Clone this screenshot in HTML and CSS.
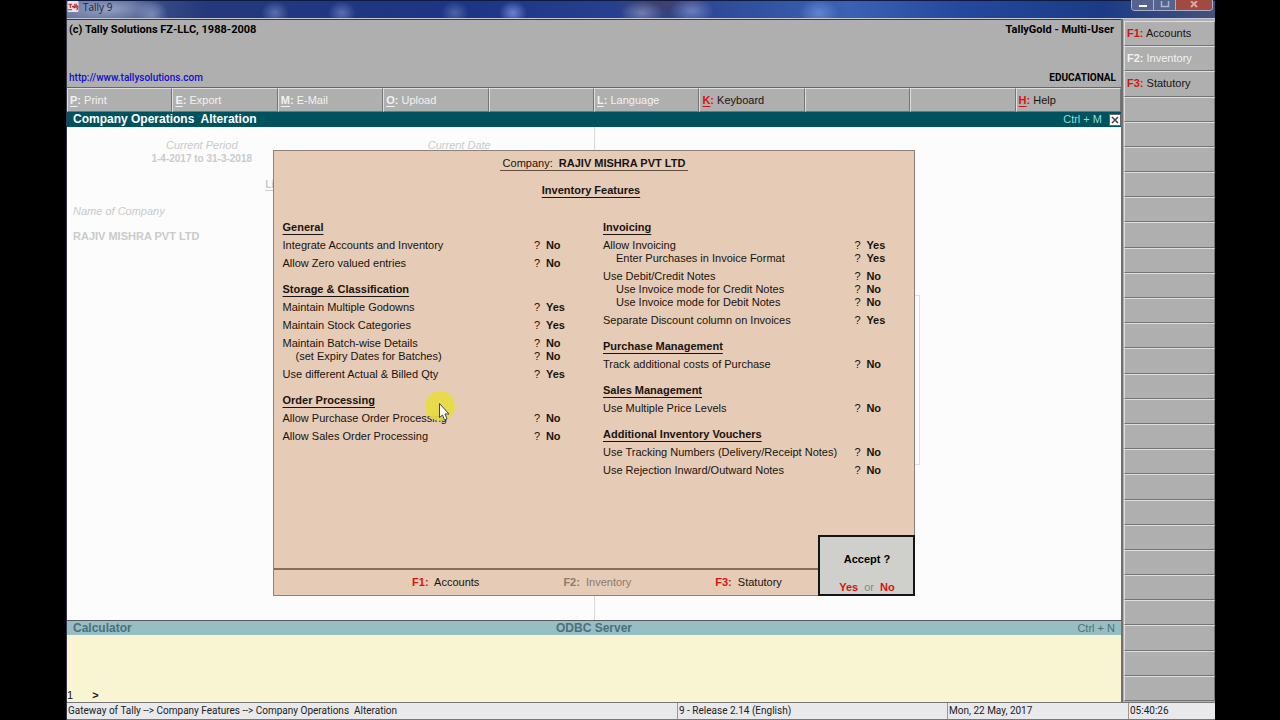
FILE: index.html
```html
<!DOCTYPE html>
<html lang="en">
<head>
<meta charset="utf-8">
<title>Tally 9</title>
<link rel="stylesheet" href="styles.css">
</head>
<body>
<div class="window">
  <header class="titlebar">
    <svg class="app-icon" viewBox="0 0 12 12" aria-hidden="true"><rect width="12" height="12" rx="1" fill="#eee3e6"/><path d="M1 3.500h4M3 3.500v4M5 7q.5-2 2-1v2M8 3v5M9.500 3v5M10.500 5l1 2-1.500 3M0 9.500h5" fill="none" stroke="#b0282c" stroke-width="1.200"/></svg>
    <span class="app-name">Tally 9</span>
    <div class="win-controls">
      <button class="win-btn" aria-label="Minimize"><svg viewBox="0 0 10 8"><path d="M1 4h8v2H1z" fill="#fff"/></svg></button>
      <button class="win-btn" aria-label="Restore"><svg viewBox="0 0 10 8"><path d="M1.500 0v5.500h7V0" fill="none" stroke="#a9b5d0" stroke-width="1.500"/></svg></button>
      <button class="win-btn win-close" aria-label="Close"><svg viewBox="0 0 10 8"><path d="M2 0l6 6M8 0L2 6" stroke="#d8a9a4" stroke-width="2"/></svg></button>
    </div>
  </header>

  <div class="workspace">
    <div class="main">
      <section class="banner">
        <div class="banner-row"><span>(c) Tally Solutions FZ-LLC, 1988-2008</span><span class="edition">TallyGold - Multi-User</span></div>
        <div class="banner-row"><a class="site" href="#">http://www.tallysolutions.com</a><span class="mode">EDUCATIONAL</span></div>
      </section>
      <nav class="toolbar">
        <button class="tool off"><b><u>P</u>:</b> Print</button>
        <button class="tool off"><b><u>E</u>:</b> Export</button>
        <button class="tool off"><b><u>M</u>:</b> E-Mail</button>
        <button class="tool off"><b><u>O</u>:</b> Upload</button>
        <button class="tool" aria-label="Empty"></button>
        <button class="tool off"><b><u>L</u>:</b> Language</button>
        <button class="tool"><b><u>K</u>:</b> Keyboard</button>
        <button class="tool" aria-label="Empty"></button>
        <button class="tool" aria-label="Empty"></button>
        <button class="tool"><b><u>H</u>:</b> Help</button>
      </nav>
      <div class="screen-head">
        <h1>Company Operations&nbsp; Alteration</h1>
        <span class="shortcut">Ctrl + M</span>
        <button class="close" aria-label="Close screen"><svg viewBox="0 0 8 8"><path d="M1 1l6 6M7 1L1 7" stroke="#444" stroke-width="1.500"/></svg></button>
      </div>

      <div class="stage">
        <div class="gateway">
          <div class="periods">
            <div><i>Current Period</i><b>1-4-2017 to 31-3-2018</b></div>
            <div><i>Current Date</i></div>
          </div>
          <p class="list-title">List of Selected Companies</p>
          <p class="company-label">Name of Company</p>
          <p class="company-name">RAJIV MISHRA PVT LTD</p>
        </div>
        <div class="gateway-right"><div class="menu-frame"></div></div>

        <section class="dialog">
          <p class="company">Company:&nbsp; <b>RAJIV MISHRA PVT LTD</b></p>
          <h2>Inventory Features</h2>
          <div class="features">
            <div class="column">
              <h3>General</h3>
              <dl>
                <div class="row"><dt>Integrate Accounts and Inventory</dt><dd><span>?</span><b>No</b></dd></div>
                <div class="row"><dt>Allow Zero valued entries</dt><dd><span>?</span><b>No</b></dd></div>
              </dl>
              <h3>Storage &amp; Classification</h3>
              <dl>
                <div class="row"><dt>Maintain Multiple Godowns</dt><dd><span>?</span><b>Yes</b></dd></div>
                <div class="row"><dt>Maintain Stock Categories</dt><dd><span>?</span><b>Yes</b></dd></div>
                <div class="row"><dt>Maintain Batch-wise Details</dt><dd><span>?</span><b>No</b></dd></div>
                <div class="row sub"><dt>(set Expiry Dates for Batches)</dt><dd><span>?</span><b>No</b></dd></div>
                <div class="row"><dt>Use different Actual &amp; Billed Qty</dt><dd><span>?</span><b>Yes</b></dd></div>
              </dl>
              <h3>Order Processing</h3>
              <dl>
                <div class="row"><dt>Allow Purchase Order Processing</dt><dd><span>?</span><b>No</b></dd></div>
                <div class="row"><dt>Allow Sales Order Processing</dt><dd><span>?</span><b>No</b></dd></div>
              </dl>
            </div>
            <div class="column">
              <h3>Invoicing</h3>
              <dl>
                <div class="row"><dt>Allow Invoicing</dt><dd><span>?</span><b>Yes</b></dd></div>
                <div class="row sub"><dt>Enter Purchases in Invoice Format</dt><dd><span>?</span><b>Yes</b></dd></div>
                <div class="row"><dt>Use Debit/Credit Notes</dt><dd><span>?</span><b>No</b></dd></div>
                <div class="row sub"><dt>Use Invoice mode for Credit Notes</dt><dd><span>?</span><b>No</b></dd></div>
                <div class="row sub"><dt>Use Invoice mode for Debit Notes</dt><dd><span>?</span><b>No</b></dd></div>
                <div class="row"><dt>Separate Discount column on Invoices</dt><dd><span>?</span><b>Yes</b></dd></div>
              </dl>
              <h3>Purchase Management</h3>
              <dl>
                <div class="row"><dt>Track additional costs of Purchase</dt><dd><span>?</span><b>No</b></dd></div>
              </dl>
              <h3>Sales Management</h3>
              <dl>
                <div class="row"><dt>Use Multiple Price Levels</dt><dd><span>?</span><b>No</b></dd></div>
              </dl>
              <h3>Additional Inventory Vouchers</h3>
              <dl>
                <div class="row"><dt>Use Tracking Numbers (Delivery/Receipt Notes)</dt><dd><span>?</span><b>No</b></dd></div>
                <div class="row"><dt>Use Rejection Inward/Outward Notes</dt><dd><span>?</span><b>No</b></dd></div>
              </dl>
            </div>
          </div>
          <footer class="dialog-foot">
            <button class="fkey"><b>F1:</b>&nbsp; Accounts</button>
            <button class="fkey current"><b>F2:</b>&nbsp; Inventory</button>
            <button class="fkey"><b>F3:</b>&nbsp; Statutory</button>
          </footer>
          <div class="accept" role="alertdialog" aria-label="Accept">
            <strong>Accept ?</strong>
            <div class="choices"><button>Yes</button><span>or</span><button>No</button></div>
          </div>
          <svg class="pointer" viewBox="0 0 32 32" aria-hidden="true"><circle cx="16" cy="16" r="15" fill="#e8dc3c" fill-opacity=".88"/><path d="M15.500 13.500v14l3-2.500 2 5 2.500-1-2-5h4z" fill="#fff" stroke="#444" stroke-width="1"/></svg>
        </section>
      </div>

      <div class="calc-head"><b>Calculator</b><b>ODBC Server</b><span>Ctrl + N</span></div>
      <div class="calc"><span class="line-no">1</span><b>&gt;</b></div>
    </div>

    <aside class="sidebar">
      <button class="side"><b>F1:</b> Accounts</button>
      <button class="side off"><b>F2:</b> Inventory</button>
      <button class="side"><b>F3:</b> Statutory</button>
      <span class="side"></span><span class="side"></span><span class="side"></span>
      <span class="side"></span><span class="side"></span><span class="side"></span>
      <span class="side"></span><span class="side"></span><span class="side"></span>
      <span class="side"></span><span class="side"></span><span class="side"></span>
      <span class="side"></span><span class="side"></span><span class="side"></span>
      <span class="side"></span><span class="side"></span><span class="side"></span>
      <span class="side"></span><span class="side"></span><span class="side"></span>
      <span class="side"></span><span class="side"></span><span class="side"></span>
    </aside>
  </div>

  <footer class="status">
    <span>Gateway of Tally --&gt; Company Features --&gt; Company Operations&nbsp; Alteration</span>
    <span>9 - Release 2.14 (English)</span>
    <span>Mon, 22 May, 2017</span>
    <span>05:40:26</span>
  </footer>
</div>
</body>
</html>
```
FILE: styles.css
```css
* { box-sizing: border-box; }
body {
  margin: 0;
  background: #000;
  font: 11px/13px "Liberation Sans", Arial, sans-serif;
  color: #181410;
}
button { font: inherit; color: inherit; background: none; border: 0; padding: 0; margin: 0; text-align: left; }
h1, h2, h3, p, dl, dd { margin: 0; font-size: inherit; }
svg { display: block; }

.window {
  display: flex;
  flex-direction: column;
  min-height: 100vh;
  margin: 0 65px 0 66px;
  border-left: 1px solid #33334a;
  background: #afafaf;
}

/* Title bar */
.titlebar {
  display: flex;
  align-items: flex-start;
  gap: 4px;
  height: 19px;
  border-top: 1px solid #101a40;
  border-bottom: 1px solid #c3c8d4;
  background:
    radial-gradient(ellipse 60px 16px at 40px 8px, #a9b3cfcc, transparent),
    radial-gradient(ellipse 16px 14px at 85px 14px, #8d9cc5aa, transparent),
    radial-gradient(ellipse 14px 12px at 208px 12px, #7f94d499, transparent),
    radial-gradient(ellipse 14px 12px at 275px 12px, #7f94d499, transparent),
    radial-gradient(ellipse 14px 12px at 388px 12px, #6579b8aa, transparent),
    radial-gradient(ellipse 14px 12px at 446px 12px, #7f94e0cc, transparent),
    radial-gradient(ellipse 22px 12px at 575px 12px, #8792c0bb, transparent),
    radial-gradient(ellipse 22px 14px at 625px 10px, #7f92d0bb, transparent),
    radial-gradient(ellipse 50px 18px at 595px 2px, #43406a, transparent),
    radial-gradient(ellipse 20px 14px at 752px 12px, #7094dcbb, transparent),
    linear-gradient(90deg, #5f6f9c, #24397c 12%, #1c3585 35%, #2c4794 55%, #3a62b2 68%, #24489c 78%, #1b3b86 90%, #45517a);
}
.app-icon { width: 12px; height: 11px; }
.app-name { font: 10px/12px "Open Sans", "Noto Sans", sans-serif; color: #1c2338; }
.win-controls { display: flex; margin: -2px 2px 0 auto; border: 1px solid #a8b1c9; border-top: 0; border-radius: 0 0 4px 4px; overflow: hidden; }
.win-btn { display: grid; place-items: center; width: 22px; height: 11px; background: #54648f; border-right: 1px solid #a8b1c9; }
.win-btn svg { width: 10px; height: 8px; }
.win-close { width: 36px; background: #a04a42; border-right: 0; }

/* Frame */
.workspace { flex: 1; display: grid; grid-template-columns: 1fr 92px; }
.main { display: flex; flex-direction: column; border-right: 2px solid #707070; }
.banner {
  display: flex;
  flex-direction: column;
  justify-content: space-between;
  height: 69px;
  padding: 3px 5px 3px 2px;
  border-top: 1px solid #333a50;
  border-bottom: 1px solid #666;
  font-family: Roboto, sans-serif;
  font-weight: bold;
  color: #000;
}
.banner-row { display: flex; justify-content: space-between; }
.edition { padding-right: 2px; }
.site { color: #1010c8; text-decoration: none; font-weight: 500; font-size: 10px; }
.mode { font-size: 10px; }
.toolbar { display: grid; grid-template-columns: repeat(10, 1fr); height: 24px; }
.tool, .side {
  padding-left: 2px;
  background: #afafaf;
  border: 1px solid;
  border-color: #dedede #747474 #747474 #dedede;
  white-space: nowrap;
}
.tool b, .side b { color: #d6150c; }
.off, .tool.off b, .side.off b { color: #f2f2f2; }
.tool u { text-underline-offset: 2px; }
.screen-head {
  display: flex;
  align-items: center;
  height: 15px;
  padding-left: 6px;
  background: #00525e;
  color: #fff;
  font-size: 12px;
}
.shortcut { margin-left: auto; margin-right: 7px; color: #8fdcdc; font-size: 11px; }
.close { display: grid; place-items: center; width: 12px; height: 12px; background: #fff; border: 1px solid #666; }
.close svg { width: 8px; height: 8px; }

/* Backdrop */
.stage {
  position: relative;
  flex: 1;
  display: grid;
  grid-template-columns: 1fr 1fr;
  padding-bottom: 24px;
  background: linear-gradient(#d8d8d8, #d8d8d8) 50% 0 / 1px 100% no-repeat #fcfcfc;
}
.gateway, .gateway-right { grid-row: 1; }
.gateway { grid-column: 1; padding: 12px 6px; color: #cacaca; }
.gateway-right { grid-column: 2; padding: 168px 201px 0 0; }
.periods { display: grid; grid-template-columns: 1fr 1fr; text-align: center; }
.periods i, .periods b { display: block; }
.periods b { font-size: 10px; }
.list-title { margin-top: 13px; text-align: center; font-size: 10px; font-weight: bold; text-decoration: underline; text-underline-offset: 2px; }
.company-label { margin-top: 14px; font-style: italic; }
.company-name { margin-top: 12px; font-weight: bold; }
.menu-frame { height: 170px; border: 1px solid #dedede; }

/* Feature dialog */
.dialog {
  position: relative;
  grid-area: 1 / 1 / 2 / 3;
  justify-self: center;
  display: flex;
  flex-direction: column;
  width: 61%;
  min-width: 642px;
  margin-top: 23px;
  padding-top: 6px;
  background: #e6cbb6;
  border: 1px solid #8d817a;
}
.company { align-self: center; padding: 0 3px; border-bottom: 1px solid #65503f; }
.dialog h2, .dialog h3 { text-decoration: underline; text-underline-offset: 3px; }
.dialog h2 { margin-top: 13px; padding-right: 6px; text-align: center; }
.features { flex: 1; display: grid; grid-template-columns: 1fr 1fr; gap: 9px; padding: 11px 0 0 9px; }
.dialog h3 { margin-top: 13px; }
.row { display: grid; grid-template-columns: 251fr 60fr; margin-top: 5px; }
.row.sub { margin-top: 0; }
.row.sub dt { padding-left: 13px; }
.row dd { display: grid; grid-template-columns: 12px 1fr; }
.dialog-foot { display: flex; justify-content: center; gap: 84px; padding: 6px 0 6px 6px; border-top: 2px solid #8c6b5b; }
.fkey b { color: #d6150c; }
.fkey.current, .fkey.current b { color: #8d7a6d; }
.accept {
  position: absolute;
  right: -1px;
  bottom: -1px;
  display: flex;
  flex-direction: column;
  justify-content: space-between;
  align-items: center;
  width: 97px;
  height: 61px;
  padding: 16px 0 0;
  background: #cfcfcb;
  border: 2px solid #151515;
}
.accept strong { color: #000; }
.choices { display: flex; gap: 6px; color: #888; }
.choices button { font-weight: bold; color: #d6150c; }
.pointer { position: absolute; left: 150px; top: 239px; width: 32px; height: 32px; }

/* Calculator */
.calc-head {
  display: grid;
  grid-template-columns: 1fr auto 1fr;
  align-items: center;
  height: 15px;
  padding: 0 6px;
  border-top: 1px solid #5a5a5a;
  background: #97bec2;
  color: #4d6f7a;
}
.calc-head b { font-size: 12px; }
.calc-head span { text-align: right; }
.calc { display: flex; align-items: flex-end; gap: 19px; height: 67px; background: #f9f5d3; }

/* Function key column */
.sidebar { display: grid; grid-template-rows: repeat(27, 1fr); padding: 2px 0 1px 1px; }

/* Status bar */
.status {
  display: grid;
  grid-template-columns: 611fr 270fr 181fr 86fr;
  height: 18px;
  border-top: 1px solid #77777a;
  border-bottom: 1px solid #77777a;
  background: #e9e8ea;
  font: 10px/16px Roboto, sans-serif;
  color: #222;
}
.status span { padding-left: 1px; border-right: 1px solid #999; white-space: nowrap; }
.status span:last-child { border-right: 0; }
```
